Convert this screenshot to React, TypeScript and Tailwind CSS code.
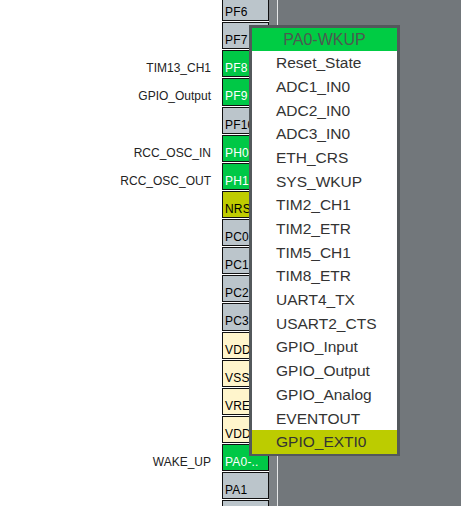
import React from "react";

type Pin = { name: string; kind: "gray" | "green" | "olive" | "power"; label?: string };

const pins: Pin[] = [
  { name: "PF6", kind: "gray" },
  { name: "PF7", kind: "gray" },
  { name: "PF8", kind: "green", label: "TIM13_CH1" },
  { name: "PF9", kind: "green", label: "GPIO_Output" },
  { name: "PF10", kind: "gray" },
  { name: "PH0-..", kind: "green", label: "RCC_OSC_IN" },
  { name: "PH1-..", kind: "green", label: "RCC_OSC_OUT" },
  { name: "NRST", kind: "olive" },
  { name: "PC0", kind: "gray" },
  { name: "PC1", kind: "gray" },
  { name: "PC2", kind: "gray" },
  { name: "PC3", kind: "gray" },
  { name: "VDD", kind: "power" },
  { name: "VSSA", kind: "power" },
  { name: "VREF+", kind: "power" },
  { name: "VDD", kind: "power" },
  { name: "PA0-..", kind: "green", label: "WAKE_UP" },
  { name: "PA1", kind: "gray" },
  // only the top edge of the next pin shows
  { name: "", kind: "gray" },
];

const kindClass: Record<Pin["kind"], string> = {
  gray: "bg-[#bbc5cb] text-black",
  green: "bg-[#00c846] text-white",
  olive: "bg-[#bfcc00] text-black",
  power: "bg-[#fff5cc] text-black",
};

const signals = [
  "Reset_State",
  "ADC1_IN0",
  "ADC2_IN0",
  "ADC3_IN0",
  "ETH_CRS",
  "SYS_WKUP",
  "TIM2_CH1",
  "TIM2_ETR",
  "TIM5_CH1",
  "TIM8_ETR",
  "UART4_TX",
  "USART2_CTS",
  "GPIO_Input",
  "GPIO_Output",
  "GPIO_Analog",
  "EVENTOUT",
  "GPIO_EXTI0",
];

export default function App() {
  const selected = "GPIO_EXTI0";

  return (
    <div className="relative flex h-[506px] w-[461px] overflow-hidden bg-white font-['Liberation_Sans',Arial,sans-serif]">
      {/* pin column with signal labels */}
      <div className="-mt-[6px] flex w-[269px] shrink-0 flex-col">
        {pins.map((p, i) => (
          <div key={i} className="mb-px flex h-[27.125px] shrink-0">
            <div className="w-[211px] whitespace-nowrap pt-[11px] text-right text-[12px] leading-[14px] text-[#222]">
              {p.label ?? ""}
            </div>
            <div
              className={`ml-[11px] w-[47px] overflow-hidden whitespace-nowrap border border-[#111] pl-[2px] pt-[10px] text-[12px] leading-[14px] tracking-[0.2px] ${kindClass[p.kind]}`}
            >
              {p.name}
            </div>
          </div>
        ))}
      </div>

      {/* chip body */}
      <div className="w-[8px] shrink-0 bg-[#7c8185]" />
      <div className="w-px shrink-0 bg-[#e4e6e7]" />
      <div className="flex-1 bg-[#72777b]" />

      {/* pin function menu */}
      <div className="absolute left-[249px] top-[25px] w-[151px] border-[3px] border-b-2 border-[#53585b] bg-white">
        <div className="flex h-[23px] items-center justify-center bg-[#00cc44] text-[16px] text-[#4c5a50]">
          PA0-WKUP
        </div>
        {signals.map((s) => (
          <div
            key={s}
            className={`flex h-[23.7px] items-center pl-[24px] text-[15.5px] text-[#333] ${
              s === selected ? "bg-[#bccc00]" : ""
            }`}
          >
            {s}
          </div>
        ))}
      </div>
    </div>
  );
}
